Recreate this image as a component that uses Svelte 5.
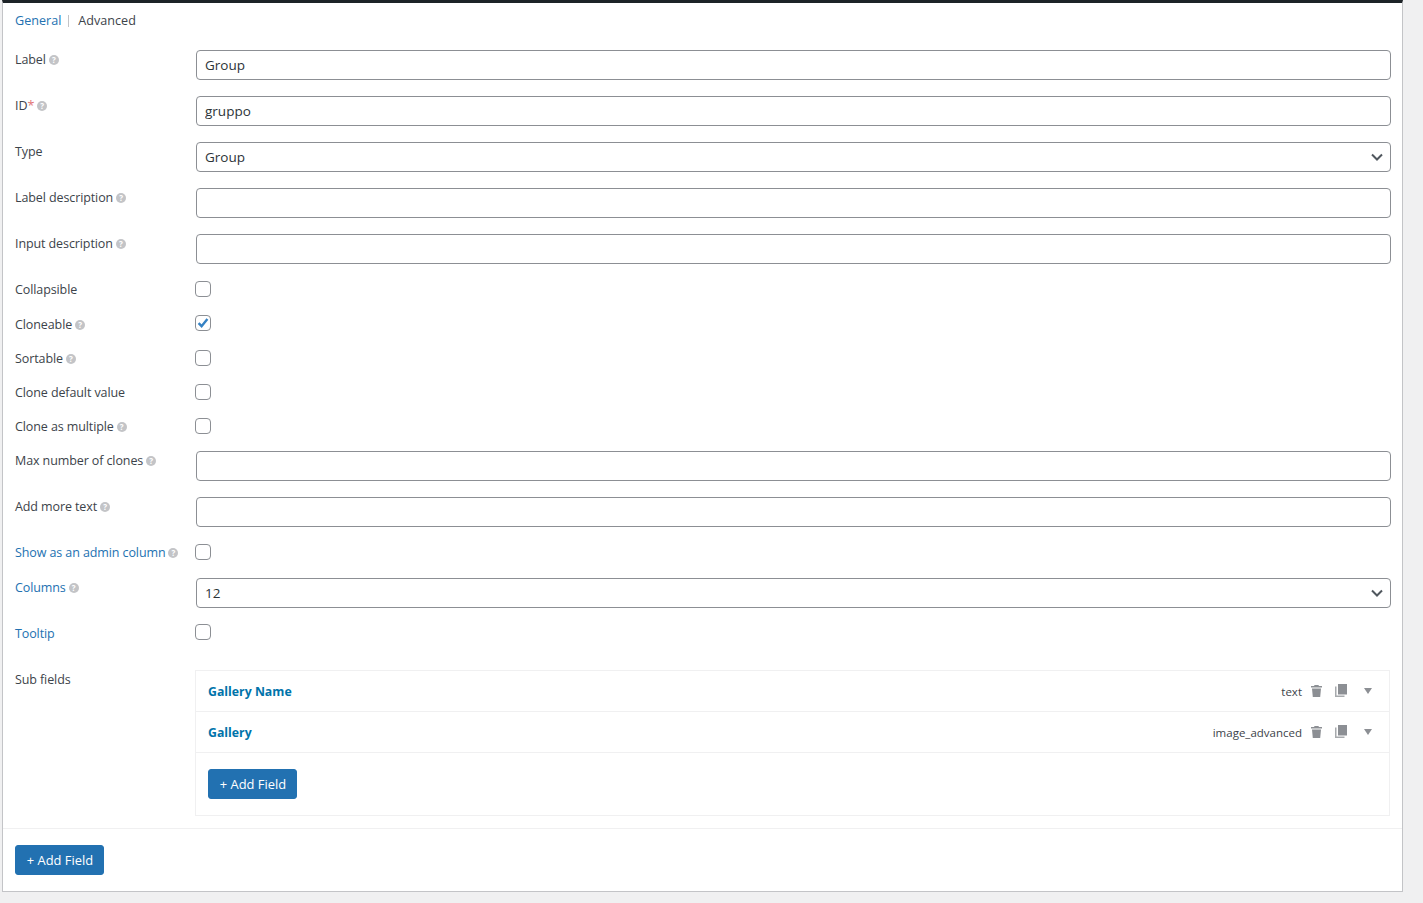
<script>
  const before = [
    { label: 'Label', help: true, type: 'text', value: 'Group' },
    { label: 'ID', req: true, help: true, type: 'text', value: 'gruppo' },
    { label: 'Type', type: 'select', value: 'Group' },
    { label: 'Label description', help: true, type: 'text', value: '' },
    { label: 'Input description', help: true, type: 'text', value: '' },
    { label: 'Collapsible', type: 'check' },
    { label: 'Cloneable', help: true, type: 'check', checked: true },
    { label: 'Sortable', help: true, type: 'check' },
    { label: 'Clone default value', type: 'check' },
    { label: 'Clone as multiple', help: true, type: 'check' },
    { label: 'Max number of clones', help: true, type: 'text', value: '' },
    { label: 'Add more text', help: true, type: 'text', value: '' },
    { label: 'Show as an admin column', help: true, type: 'check', link: true },
    { label: 'Columns', help: true, type: 'select', value: '12', link: true },
    { label: 'Tooltip', type: 'check', link: true },
  ];
  const subFields = [
    { name: 'Gallery Name', type: 'text' },
    { name: 'Gallery', type: 'image_advanced' },
  ];
</script>

<div class="panel">
  <div class="tabs">
    <a class="tab active" href="#general">General</a>
    <a class="tab" href="#advanced">Advanced</a>
  </div>

  <div class="body">
    {#each before as f}
      <div class="field">
        <div class="lbl" class:link={f.link}>
          {f.label}{#if f.req}<span class="req">*</span>{/if}{#if f.help}<span class="help">?</span>{/if}
        </div>
        <div class="ctl">
          {#if f.type === 'text'}
            <input type="text" value={f.value} />
          {:else if f.type === 'select'}
            <div class="select">
              <span>{f.value}</span>
              <svg width="12" height="8" viewBox="0 0 12 8"><path d="M1 1.500l5 5 5-5" fill="none" stroke="#50575e" stroke-width="2"/></svg>
            </div>
          {:else}
            <span class="check">
              {#if f.checked}
                <svg width="14" height="14" viewBox="0 0 14 14"><path d="M2.600 7.200l3 3L11.400 3" fill="none" stroke="#3582c4" stroke-width="2.400"/></svg>
              {/if}
            </span>
          {/if}
        </div>
      </div>
    {/each}

    <div class="field subs">
      <div class="lbl">Sub fields</div>
      <div class="subbox">
        {#each subFields as s}
          <div class="sub">
            <a class="subname" href="#sub">{s.name}</a>
            <span class="subtype">{s.type}</span>
            <svg class="ico-trash" width="11" height="12" viewBox="0 0 11 12"><path d="M3.500 0h4l.4 1H11v1.500H0V1h3.100zM1 3.500h9l-.8 8.500H1.800z" fill="#8c8f94"/></svg>
            <svg class="ico-copy" width="12" height="13" viewBox="0 0 12 13"><path d="M3 0h9v10.500H3z" fill="#8c8f94"/><path d="M0 2.500h1.500V11.500h8V13H0z" fill="#a7aaad"/></svg>
            <span class="caret"></span>
          </div>
        {/each}
        <div class="subfoot"><button class="btn">+ Add Field</button></div>
      </div>
    </div>
  </div>

  <div class="foot"><button class="btn">+ Add Field</button></div>
</div>

<style>
  :global(body) {
    background: #f0f0f1;
    font-family: "Open Sans", "Noto Sans", sans-serif;
    font-size: 13px;
    line-height: 1.4;
    color: #3c434a;
  }

  .panel {
    box-sizing: border-box;
    width: 1401px;
    height: 892px;
    margin-left: 2px;
    background: #fff;
    border: 1px solid #c3c4c7;
    border-top: 3px solid #1d2327;
    display: flex;
    flex-direction: column;
  }

  .tabs {
    display: flex;
    align-items: center;
    height: 35px;
    padding: 0 12px;
  }

  .tab {
    color: #3c434a;
    text-decoration: none;
    font-size: 12.600px;
    line-height: 12px;
    padding-right: 7px;
    margin-right: 9px;
  }

  .tab.active {
    color: #2271b1;
    border-right: 1px solid #c3c4c7;
  }

  .body {
    flex: 1;
    padding: 12.300px 11px 12px 12px;
    border-bottom: 1px solid #f0f0f1;
  }

  .field {
    display: flex;
    align-items: flex-start;
    margin-bottom: 16px;
  }

  .lbl {
    flex: 0 0 181px;
    white-space: nowrap;
    font-size: 12.500px;
    padding-top: 2px;
    line-height: 16.200px;
    letter-spacing: -0.1px;
  }

  .lbl.link { color: #2271b1; }
  .req { color: #d63638; opacity: 0.7; }

  .help {
    display: inline-block;
    width: 10px;
    height: 10px;
    margin-left: 3px;
    border-radius: 50%;
    background: #c3c4c7;
    color: #fff;
    font-size: 8px;
    font-weight: 700;
    line-height: 10px;
    text-align: center;
    vertical-align: 1px;
    letter-spacing: 0;
  }

  .ctl { flex: 1; min-width: 0; }

  input[type="text"], .select {
    box-sizing: border-box;
    display: block;
    width: 100%;
    height: 30px;
    margin: 0;
    padding: 0 8px;
    background: #fff;
    border: 1px solid #8c8f94;
    border-radius: 4px;
    color: #2c3338;
    font: inherit;
    font-size: 13.500px;
    line-height: 28px;
  }

  .select {
    display: flex;
    align-items: center;
    justify-content: space-between;
    padding-right: 7px;
  }

  .check {
    box-sizing: border-box;
    display: block;
    width: 16px;
    height: 16px;
    margin: 0.900px 0 1.300px -1px;
    background: #fff;
    border: 1px solid #8c8f94;
    border-radius: 4px;
  }

  .check svg { display: block; margin: 0; }

  .subs { margin: 28px 0 0; }

  .subbox {
    flex: 1;
    margin-left: -1px;
    margin-right: 1px;
    border: 1px solid #f0f0f1;
  }

  .sub {
    box-sizing: border-box;
    display: flex;
    align-items: center;
    height: 41px;
    padding: 1px 12px 0;
    border-bottom: 1px solid #f0f0f1;
  }

  .subname {
    flex: 1;
    color: #0073aa;
    font-weight: 700;
    text-decoration: none;
    font-size: 12.300px;
  }

  .subtype { font-size: 11.500px; color: #3c434a; padding-top: 1px; }

  .ico-trash { margin: 0 0 0 9px; }
  .ico-copy { margin: 0 0 2px 13px; }

  .caret {
    width: 0;
    height: 0;
    margin: 0 5px 0 17px;
    border-left: 4px solid transparent;
    border-right: 4px solid transparent;
    border-top: 6px solid #8c8f94;
  }

  .subfoot { padding: 16px 12px; }

  .btn {
    display: block;
    box-sizing: border-box;
    width: 89px;
    height: 30px;
    padding: 1px 0 0 1px;
    background: #2271b1;
    border: 1px solid #2271b1;
    border-radius: 3px;
    color: #fff;
    font: inherit;
    font-size: 12.900px;
    text-align: center;
  }

  .foot { padding: 16px 12px; }
</style>
